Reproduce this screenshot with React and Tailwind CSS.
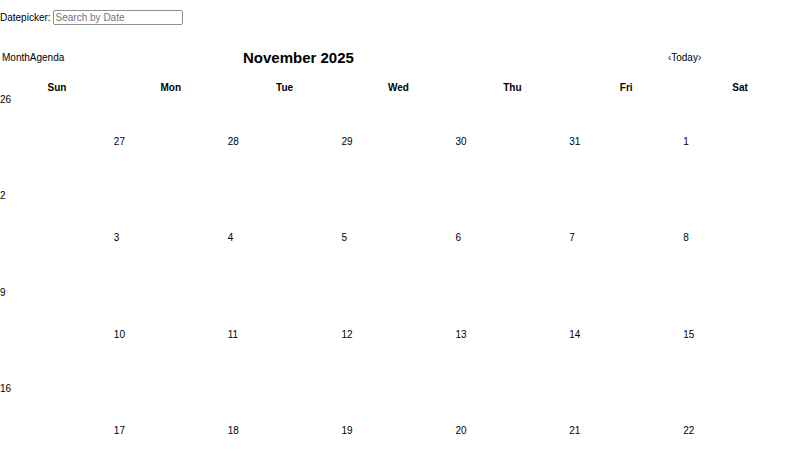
import { useState } from "react";

const DAYS = ["Sun", "Mon", "Tue", "Wed", "Thu", "Fri", "Sat"];

// Nov 2025 month grid, starting on the Sunday before the 1st (only the weeks in view)
function buildWeeks(count) {
  const start = new Date(2025, 9, 26);
  const weeks = [];
  for (let w = 0; w < count; w++) {
    const week = [];
    for (let d = 0; d < 7; d++) {
      const date = new Date(start);
      date.setDate(start.getDate() + w * 7 + d);
      week.push(date.getDate());
    }
    weeks.push(week);
  }
  return weeks;
}

function Toolbar() {
  return (
    <div className="mt-[24px] flex items-center">
      {/* View switcher */}
      <div className="w-[243px] pl-[2px]">
        <button type="button">Month</button>
        <button type="button">Agenda</button>
      </div>

      <h2 className="text-[15px] leading-[17px] font-bold">November 2025</h2>

      {/* Navigation */}
      <div className="ml-[314px]">
        <button type="button">‹</button>
        <button type="button">Today</button>
        <button type="button">›</button>
      </div>
    </div>
  );
}

export default function App() {
  const [search, setSearch] = useState("");
  const weeks = buildWeeks(4);

  return (
    <div className="h-[450px] overflow-hidden bg-white pt-[10px] font-['Liberation_Sans',Arial,sans-serif] text-[10px] leading-[12px] text-black">
      {/* Datepicker */}
      <div className="flex h-[15px] items-center">
        <label htmlFor="date-search">Datepicker:</label>
        <input
          id="date-search"
          type="text"
          placeholder="Search by Date"
          value={search}
          onChange={(e) => setSearch(e.target.value)}
          className="ml-[2px] h-[15px] w-[130px] rounded-[2px] border border-[#8f8f8f] px-[2px] text-[10px] leading-[13px] placeholder:text-[#757575] outline-none"
        />
      </div>

      <Toolbar />

      {/* Weekday header */}
      <div className="mt-[16px] grid w-[797px] grid-cols-7 text-center font-bold">
        {DAYS.map((d) => (
          <div key={d}>{d}</div>
        ))}
      </div>

      {/* Month weeks */}
      {weeks.map((week, i) => (
        <div key={i} className="h-[96.33px] w-[797px]">
          <div>{week[0]}</div>
          <div className="mt-[30px] grid grid-cols-7">
            <div />
            {week.slice(1).map((day, j) => (
              <div key={j}>{day}</div>
            ))}
          </div>
        </div>
      ))}
    </div>
  );
}
